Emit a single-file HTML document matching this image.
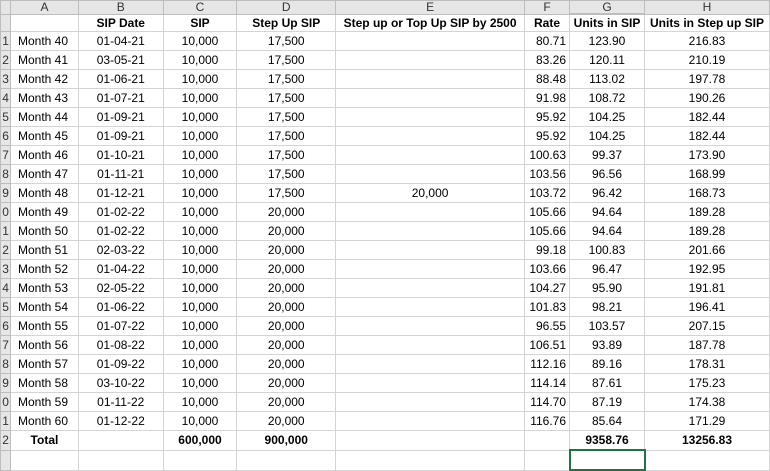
<!DOCTYPE html>
<html><head><meta charset="utf-8"><style>
body{margin:0;background:#fff;width:770px;height:452px;overflow:hidden;font-family:"Liberation Sans",sans-serif;font-size:12px;color:#000}
table{border-collapse:collapse;table-layout:fixed;position:absolute;left:0;top:0}
td{border:1px solid #d4d4d4;height:18px;padding:0 3px;white-space:nowrap;overflow:hidden;text-align:center;line-height:18px}
tr.h td{background:#e6e6e6;height:12px;line-height:12px;color:#333;border-color:#bdbdbd}
tr.t1 td{height:16px;line-height:16px;font-weight:bold}
td.rn{background:#e6e6e6;color:#333;text-align:right;padding:0 1px 0 0;border-color:#bdbdbd;font-size:12px}
td.a{text-align:left;padding-left:7px}
td.r{text-align:right}
tr.t td{font-weight:bold}
td.g{background:#d2d2d2;border-bottom:2px solid #217346;color:#1f5c3a}
</style></head><body>
<table>
<colgroup><col style="width:10px"><col style="width:68px"><col style="width:85px"><col style="width:74px"><col style="width:99px"><col style="width:189px"><col style="width:45px"><col style="width:75px"><col style="width:125px"></colgroup>
<tr class="h"><td style="background:#e6e6e6"></td><td>A</td><td>B</td><td>C</td><td>D</td><td>E</td><td>F</td><td class="g">G</td><td>H</td></tr>
<tr class="t1"><td class="rn"></td><td></td><td>SIP Date</td><td>SIP</td><td>Step Up SIP</td><td>Step up or Top Up SIP by 2500</td><td>Rate</td><td>Units in SIP</td><td>Units in Step up SIP</td></tr>
<tr><td class="rn">1</td><td class="a">Month 40</td><td>01-04-21</td><td>10,000</td><td>17,500</td><td></td><td class="r">80.71</td><td>123.90</td><td>216.83</td></tr>
<tr><td class="rn">2</td><td class="a">Month 41</td><td>03-05-21</td><td>10,000</td><td>17,500</td><td></td><td class="r">83.26</td><td>120.11</td><td>210.19</td></tr>
<tr><td class="rn">3</td><td class="a">Month 42</td><td>01-06-21</td><td>10,000</td><td>17,500</td><td></td><td class="r">88.48</td><td>113.02</td><td>197.78</td></tr>
<tr><td class="rn">4</td><td class="a">Month 43</td><td>01-07-21</td><td>10,000</td><td>17,500</td><td></td><td class="r">91.98</td><td>108.72</td><td>190.26</td></tr>
<tr><td class="rn">5</td><td class="a">Month 44</td><td>01-09-21</td><td>10,000</td><td>17,500</td><td></td><td class="r">95.92</td><td>104.25</td><td>182.44</td></tr>
<tr><td class="rn">6</td><td class="a">Month 45</td><td>01-09-21</td><td>10,000</td><td>17,500</td><td></td><td class="r">95.92</td><td>104.25</td><td>182.44</td></tr>
<tr><td class="rn">7</td><td class="a">Month 46</td><td>01-10-21</td><td>10,000</td><td>17,500</td><td></td><td class="r">100.63</td><td>99.37</td><td>173.90</td></tr>
<tr><td class="rn">8</td><td class="a">Month 47</td><td>01-11-21</td><td>10,000</td><td>17,500</td><td></td><td class="r">103.56</td><td>96.56</td><td>168.99</td></tr>
<tr><td class="rn">9</td><td class="a">Month 48</td><td>01-12-21</td><td>10,000</td><td>17,500</td><td>20,000</td><td class="r">103.72</td><td>96.42</td><td>168.73</td></tr>
<tr><td class="rn">0</td><td class="a">Month 49</td><td>01-02-22</td><td>10,000</td><td>20,000</td><td></td><td class="r">105.66</td><td>94.64</td><td>189.28</td></tr>
<tr><td class="rn">1</td><td class="a">Month 50</td><td>01-02-22</td><td>10,000</td><td>20,000</td><td></td><td class="r">105.66</td><td>94.64</td><td>189.28</td></tr>
<tr><td class="rn">2</td><td class="a">Month 51</td><td>02-03-22</td><td>10,000</td><td>20,000</td><td></td><td class="r">99.18</td><td>100.83</td><td>201.66</td></tr>
<tr><td class="rn">3</td><td class="a">Month 52</td><td>01-04-22</td><td>10,000</td><td>20,000</td><td></td><td class="r">103.66</td><td>96.47</td><td>192.95</td></tr>
<tr><td class="rn">4</td><td class="a">Month 53</td><td>02-05-22</td><td>10,000</td><td>20,000</td><td></td><td class="r">104.27</td><td>95.90</td><td>191.81</td></tr>
<tr><td class="rn">5</td><td class="a">Month 54</td><td>01-06-22</td><td>10,000</td><td>20,000</td><td></td><td class="r">101.83</td><td>98.21</td><td>196.41</td></tr>
<tr><td class="rn">6</td><td class="a">Month 55</td><td>01-07-22</td><td>10,000</td><td>20,000</td><td></td><td class="r">96.55</td><td>103.57</td><td>207.15</td></tr>
<tr><td class="rn">7</td><td class="a">Month 56</td><td>01-08-22</td><td>10,000</td><td>20,000</td><td></td><td class="r">106.51</td><td>93.89</td><td>187.78</td></tr>
<tr><td class="rn">8</td><td class="a">Month 57</td><td>01-09-22</td><td>10,000</td><td>20,000</td><td></td><td class="r">112.16</td><td>89.16</td><td>178.31</td></tr>
<tr><td class="rn">9</td><td class="a">Month 58</td><td>03-10-22</td><td>10,000</td><td>20,000</td><td></td><td class="r">114.14</td><td>87.61</td><td>175.23</td></tr>
<tr><td class="rn">0</td><td class="a">Month 59</td><td>01-11-22</td><td>10,000</td><td>20,000</td><td></td><td class="r">114.70</td><td>87.19</td><td>174.38</td></tr>
<tr><td class="rn">1</td><td class="a">Month 60</td><td>01-12-22</td><td>10,000</td><td>20,000</td><td></td><td class="r">116.76</td><td>85.64</td><td>171.29</td></tr>
<tr class="t"><td class="rn" style="font-weight:normal">2</td><td>Total</td><td></td><td>600,000</td><td>900,000</td><td></td><td></td><td>9358.76</td><td>13256.83</td></tr>
<tr><td class="rn"></td><td></td><td></td><td></td><td></td><td></td><td></td><td style="border:2px solid #217346"></td><td></td></tr>
</table>
</body></html>
